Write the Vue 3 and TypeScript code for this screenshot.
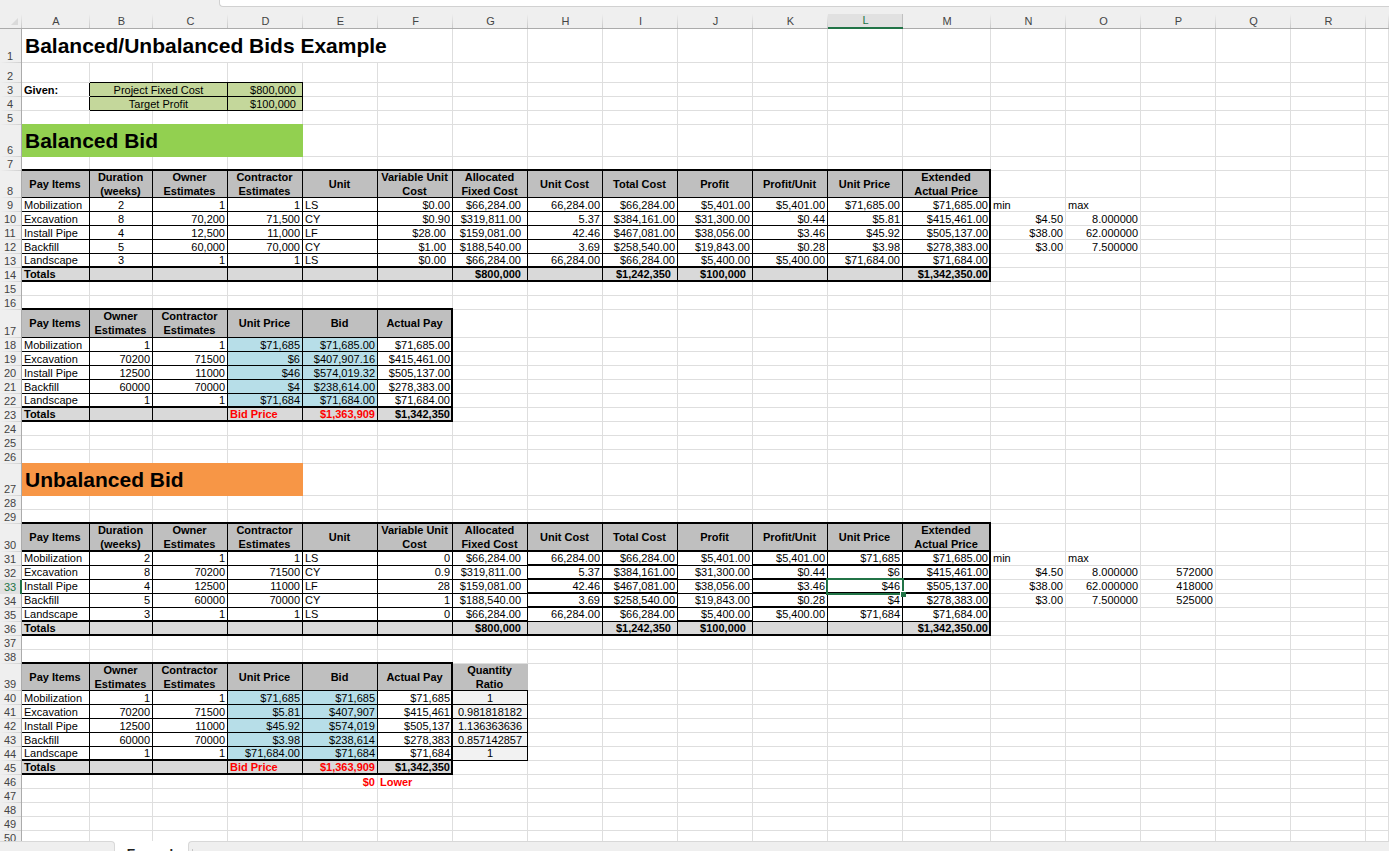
<script setup lang="ts">
interface Cell {
  v: string
  s: string
  span: number
}

interface Row {
  n: number
  size: string
  cells: Cell[]
}

const columns = 'ABCDEFGHIJKLMNOPQR'.split('')
const columnCount = columns.length + 1

const cell = (v = '', s = '', span = 1): Cell => ({ v, s, span })
const repeat = (count: number, s: string): Cell[] => Array.from({ length: count }, () => cell('', s))

/* One table row: values joined with "|", each column's classes, and a base class for all. */
function line(values: string, styles: string[], base: string, lastBase = base): Cell[] {
  const parts = values.split('|')
  return parts.map((v, i) => cell(v, `${i === parts.length - 1 ? lastBase : base} ${styles[i] ?? ''}`))
}

const content: Record<number, Cell[]> = {}
const sizes: Record<number, string> = {
  1: 'h34', 2: 'h20', 6: 'h32', 8: 'h27', 17: 'h28', 27: 'h32', 30: 'h28', 39: 'h27',
}

/* Title, givens and section banners */
content[1] = [cell('Balanced/Unbalanced Bids Example', 'title', 6)]
content[2] = [cell(), ...repeat(3, 'bottom')]
content[3] = [cell('Given:', 'bold side'), cell('Project Fixed Cost', 'box olive mid', 2), cell('$800,000', 'box olive acct')]
content[4] = [cell('', 'side'), cell('Target Profit', 'box olive mid', 2), cell('$100,000', 'box olive acct')]
content[5] = repeat(4, 'under-green')
content[6] = [cell('Balanced Bid', 'title green', 4)]
content[26] = repeat(4, 'under-orange')
content[27] = [cell('Unbalanced Bid', 'title orange', 4)]

/* Wide tables */
const wideHead =
  'Pay Items|Duration\n(weeks)|Owner\nEstimates|Contractor\nEstimates|Unit|Variable Unit\nCost|Allocated\nFixed Cost|Unit Cost|Total Cost|Profit|Profit/Unit|Unit Price|Extended\nActual Price'
const totalsWide = 'Totals||||||$800,000||$1,242,350|$100,000|||$1,342,350.00'
const totalsWideStyles = ['', '', '', '', '', '', 'acct', '', 'acct', 'acct', '', '', 'num']

content[7] = repeat(13, 'thick-bottom')
content[8] = line(wideHead, [], 'box head', 'box head thick-right')

const balanced = [
  'Mobilization|2|1|1|LS|$0.00|$66,284.00|66,284.00|$66,284.00|$5,401.00|$5,401.00|$71,685.00|$71,685.00',
  'Excavation|8|70,200|71,500|CY|$0.90|$319,811.00|5.37|$384,161.00|$31,300.00|$0.44|$5.81|$415,461.00',
  'Install Pipe|4|12,500|11,000|LF|$28.00|$159,081.00|42.46|$467,081.00|$38,056.00|$3.46|$45.92|$505,137.00',
  'Backfill|5|60,000|70,000|CY|$1.00|$188,540.00|3.69|$258,540.00|$19,843.00|$0.28|$3.98|$278,383.00',
  'Landscape|3|1|1|LS|$0.00|$66,284.00|66,284.00|$66,284.00|$5,400.00|$5,400.00|$71,684.00|$71,684.00',
]
balanced.forEach((text, i) => {
  const base = i === 4 ? 'box thick-bottom raised' : 'box'
  const styles = ['', 'mid', 'num', 'num', '', i < 2 ? 'num' : 'acct', 'acct', 'num', 'num', 'num', 'num', 'num', 'num']
  content[9 + i] = line(text, styles, base, `${base} thick-right`)
})
content[14] = line(totalsWide, totalsWideStyles, 'box total thick-bottom raised', 'box total thick-bottom raised thick-right')

content[29] = repeat(13, 'thick-bottom')
content[30] = line(wideHead, [], 'box head thick-bottom', 'box head thick-bottom thick-right')

const unbalanced = [
  'Mobilization|2|1|1|LS|0|$66,284.00|66,284.00|$66,284.00|$5,401.00|$5,401.00|$71,685|$71,685.00',
  'Excavation|8|70200|71500|CY|0.9|$319,811.00|5.37|$384,161.00|$31,300.00|$0.44|$6|$415,461.00',
  'Install Pipe|4|12500|11000|LF|28|$159,081.00|42.46|$467,081.00|$38,056.00|$3.46|$46|$505,137.00',
  'Backfill|5|60000|70000|CY|1|$188,540.00|3.69|$258,540.00|$19,843.00|$0.28|$4|$278,383.00',
  'Landscape|3|1|1|LS|0|$66,284.00|66,284.00|$66,284.00|$5,400.00|$5,400.00|$71,684|$71,684.00',
]
const thickInner = [7, 8, 10, 11, 12]
const thickLast = [0, 1, 2, 3, 4, 5, 6, 9]
unbalanced.forEach((text, i) => {
  const thick = i === 4 ? thickLast : thickInner
  const styles = ['', 'num', 'num', 'num', '', 'num', 'acct', 'num', 'num', 'num', 'num', 'num', 'num'].map(
    (s, c) => (thick.includes(c) ? `${s} thick-bottom` : s),
  )
  if (i === 2) styles[11] += ' selected'
  content[31 + i] = line(text, styles, 'box raised', 'box raised thick-right')
})
content[36] = line(totalsWide, totalsWideStyles, 'box total thick-bottom raised', 'box total thick-bottom raised thick-right')

/* Limits beside the wide tables */
const limits = [
  ['min', 'max', ''],
  ['$4.50', '8.000000', '572000'],
  ['$38.00', '62.000000', '418000'],
  ['$3.00', '7.500000', '525000'],
]
limits.forEach(([low, high, quantity], i) => {
  const s = i === 0 ? '' : 'num'
  content[9 + i].push(cell(low, s), cell(high, s))
  content[31 + i].push(cell(low, `${s} raised`), cell(high, `${s} raised`), cell(quantity, `${s} raised`))
})

/* Narrow tables */
const narrowHead = 'Pay Items|Owner\nEstimates|Contractor\nEstimates|Unit Price|Bid|Actual Pay'
const totalsNarrow = 'Totals|||Bid Price|$1,363,909|$1,342,350'
const narrowStyles = ['', 'num', 'num', 'num blue', 'num blue', 'num']

function narrowTable(top: number, rows: string[]) {
  content[top - 1] = repeat(6, 'thick-bottom')
  content[top] = line(narrowHead, [], 'box head', 'box head thick-right')
  rows.forEach((text, i) => {
    const base = i === 4 ? 'box thick-bottom raised' : 'box'
    content[top + 1 + i] = line(text, narrowStyles, base, `${base} thick-right`)
  })
  content[top + 6] = line(
    totalsNarrow,
    ['', '', '', 'red', 'red num', 'num'],
    'box total thick-bottom raised',
    'box total thick-bottom raised thick-right',
  )
}

narrowTable(17, [
  'Mobilization|1|1|$71,685|$71,685.00|$71,685.00',
  'Excavation|70200|71500|$6|$407,907.16|$415,461.00',
  'Install Pipe|12500|11000|$46|$574,019.32|$505,137.00',
  'Backfill|60000|70000|$4|$238,614.00|$278,383.00',
  'Landscape|1|1|$71,684|$71,684.00|$71,684.00',
])
narrowTable(39, [
  'Mobilization|1|1|$71,685|$71,685|$71,685',
  'Excavation|70200|71500|$5.81|$407,907|$415,461',
  'Install Pipe|12500|11000|$45.92|$574,019|$505,137',
  'Backfill|60000|70000|$3.98|$238,614|$278,383',
  'Landscape|1|1|$71,684.00|$71,684|$71,684',
])
content[39].push(cell('Quantity\nRatio', 'head ratio-head'))
;['1', '0.981818182', '1.136363636', '0.857142857', '1'].forEach((v, i) => {
  content[40 + i].push(cell(v, i === 4 ? 'box mid pale raised' : 'box mid pale'))
})
content[46] = [...repeat(4, ''), cell('$0', 'num bold red'), cell('Lower', 'bold red')]

const rows: Row[] = Array.from({ length: 50 }, (_, i) => {
  const n = i + 1
  const cells = [...(content[n] ?? [])]
  const used = cells.reduce((sum, c) => sum + c.span, 0)
  cells.push(...repeat(columnCount - used, ''))
  return { n, size: sizes[n] ?? 'h14', cells }
})
</script>

<template>
  <main class="app">
    <header class="formula">
      <input class="formula-input" type="text" aria-label="Formula bar" />
    </header>
    <div class="sheet">
      <table class="grid">
        <colgroup>
          <col class="w-row" />
          <col v-for="name in columns" :key="name" :class="`w-${name}`" />
          <col />
        </colgroup>
        <thead>
          <tr>
            <th class="corner">
              <svg width="7" height="7" viewBox="0 0 7 7" aria-hidden="true"><path d="M7 0V7H0Z" fill="#dadada" /></svg>
            </th>
            <th v-for="name in columns" :key="name" scope="col" :class="{ active: name === 'L' }">{{ name }}</th>
            <th></th>
          </tr>
        </thead>
        <tbody>
          <tr v-for="row in rows" :key="row.n" :class="row.size">
            <th scope="row" :class="{ active: row.n === 33 }">{{ row.n }}</th>
            <td v-for="(c, i) in row.cells" :key="i" :colspan="c.span" :class="c.s">
              <div class="text">{{ c.v }}</div>
            </td>
          </tr>
        </tbody>
      </table>
    </div>
    <nav class="tabs" aria-label="Sheets">
      <div class="tabs-left"></div>
      <button class="tab" type="button">Example</button>
      <div class="tabs-rest"></div>
    </nav>
  </main>
</template>

<style>
html,
body {
  margin: 0;
  background: #fff;
}
</style>

<style scoped>
.app {
  display: flex;
  flex-direction: column;
  height: 100vh;
  overflow: hidden;
  background: #fff;
  color: #000;
  font-family: "Liberation Sans", Arial, sans-serif;
  font-size: 11px;
  line-height: 14px;
}
.formula {
  flex: none;
  display: flex;
  height: 14px;
  padding-left: 219px;
  background: #efefef;
}
.formula-input {
  flex: 1;
  min-width: 0;
  height: 7px;
  box-sizing: border-box;
  padding: 0 4px;
  border: solid #d1d1d1;
  border-width: 0 0 1px 1px;
  border-radius: 0 0 0 4px;
  background: #fff;
  outline: none;
}
.sheet {
  flex: 1;
  min-height: 0;
  overflow: hidden;
}
.grid {
  width: 100%;
  table-layout: fixed;
  border-collapse: separate;
  border-spacing: 0;
}
.w-row { width: 22px; }
.w-A { width: 68px; }
.w-B { width: 63px; }
.w-C, .w-D, .w-E, .w-F, .w-G, .w-H, .w-I, .w-J, .w-K, .w-L { width: 75px; }
.w-M { width: 88px; }
.w-N, .w-O, .w-P, .w-Q, .w-R { width: 75px; }

th {
  padding: 0;
  color: #444;
  font-weight: 400;
}
thead th {
  height: 15px;
  border-bottom: 1px solid #ababab;
  box-sizing: border-box;
  line-height: 13px;
  background: linear-gradient(#efefef, #c8c8c8) right / 1px 100% no-repeat #efefef;
}
thead th.corner {
  text-align: right;
  vertical-align: bottom;
  line-height: 0;
  padding: 0 4px 3px 0;
}
thead th.active {
  border-bottom: 2px solid #217346;
  background: #e1e1e1;
  box-shadow: inset -1px 0 #c0c0c0;
  color: #217346;
}
tbody th {
  padding: 0 1px 0 0;
  border-right: 1px solid #ababab;
  vertical-align: bottom;
  background: linear-gradient(90deg, #efefef, #d0d0d0) bottom / 100% 1px no-repeat #efefef;
}
tbody th.active {
  padding-right: 0;
  border-right: 2px solid #217346;
  background: #e1e1e1;
  color: #217346;
}

.h14 { height: 14px; }
.h20 { height: 20px; }
.h27 { height: 27px; }
.h28 { height: 28px; }
.h32 { height: 32px; }
.h34 { height: 34px; }

td {
  --right: #dedede;
  --bottom: #dedede;
  --rw: -1px;
  --bw: -1px;
  padding: 0 3px 0 2px;
  vertical-align: bottom;
  white-space: nowrap;
  box-shadow: inset 0 var(--bw) var(--bottom), inset var(--rw) 0 var(--right);
}
.raised {
  padding-bottom: 2px;
  line-height: 12px;
}
.box {
  --right: #000;
  --bottom: #000;
}
.side { --right: #000; }
.bottom { --bottom: #000; }
.thick-bottom {
  --bottom: #000;
  --bw: -2px;
}
.thick-right {
  --right: #000;
  --rw: -2px;
}
.under-green { --bottom: #92d050; }
.under-orange { --bottom: #f79646; }

.num { text-align: right; }
.acct {
  padding-right: 7px;
  text-align: right;
}
.mid { text-align: center; }
.bold { font-weight: 700; }
.red { color: #f00; }
.olive { background: #c4d79b; }
.blue { background: #b7dee8; }
.pale { background: #f2f2f2; }
.total {
  background: #d9d9d9;
  font-weight: 700;
}
.head {
  padding: 0 2px 0 0;
  background: #bfbfbf;
  font-weight: 700;
  text-align: center;
  vertical-align: top;
}
.head .text {
  display: flex;
  align-items: center;
  justify-content: center;
  height: 26px;
  overflow: hidden;
  white-space: pre;
}
.ratio-head {
  --right: #bfbfbf;
  --bottom: #000;
}
.title {
  padding-left: 3px;
  font-size: 21px;
  line-height: 30px;
  font-weight: 700;
  vertical-align: middle;
}
.green {
  --right: #92d050;
  --bottom: #92d050;
  background: #92d050;
}
.orange {
  --right: #f79646;
  --bottom: #f79646;
  background: #f79646;
}

.selected { position: relative; }
.selected::before {
  content: "";
  position: absolute;
  inset: -2px -1px -1px -2px;
  border: 2px solid #217346;
}
.selected::after {
  content: "";
  position: absolute;
  right: -3px;
  bottom: -3px;
  width: 5px;
  height: 5px;
  border: solid #fff;
  border-width: 1px 0 0 1px;
  background: #217346;
}

.tabs {
  flex: none;
  display: flex;
  height: 10px;
  overflow: hidden;
}
.tabs-left {
  width: 115px;
  box-sizing: border-box;
  border: solid #d8d8d8;
  border-width: 1px 1px 0 0;
  border-radius: 0 4px 0 0;
  background: #efefef;
}
.tab {
  width: 73px;
  height: 26px;
  padding: 0 0 0 4px;
  border: 0;
  background: #fff;
  color: #222;
  font-family: inherit;
  font-size: 13px;
  line-height: 26px;
  font-weight: 700;
}
.tabs-rest {
  flex: 1;
  box-sizing: border-box;
  border: solid #d8d8d8;
  border-width: 1px 0 0 1px;
  border-radius: 4px 0 0 0;
  background: linear-gradient(#c6c6c6, #c6c6c6) 3px 7px / 1px 10px no-repeat #efefef;
}
</style>
